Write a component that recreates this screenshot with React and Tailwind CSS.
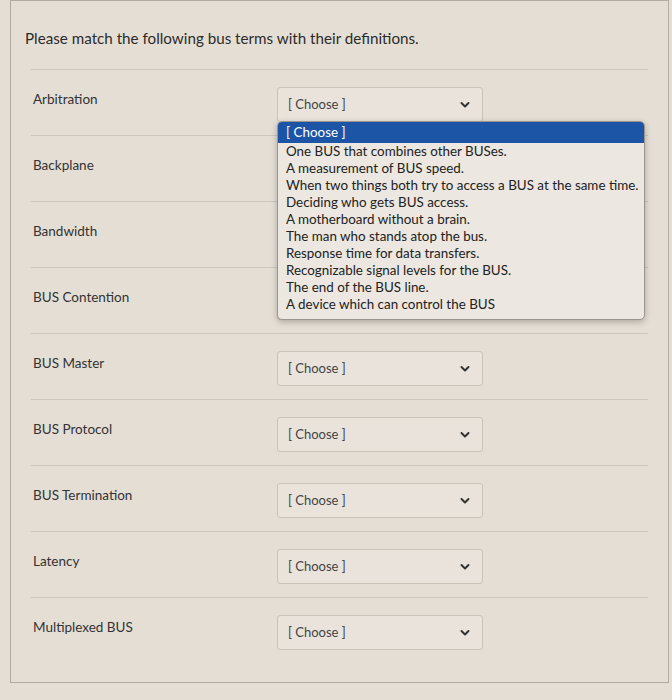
import React from 'react';

const terms = [
  'Arbitration',
  'Backplane',
  'Bandwidth',
  'BUS Contention',
  'BUS Master',
  'BUS Protocol',
  'BUS Termination',
  'Latency',
  'Multiplexed BUS',
];

const options = [
  'One BUS that combines other BUSes.',
  'A measurement of BUS speed.',
  'When two things both try to access a BUS at the same time.',
  'Deciding who gets BUS access.',
  'A motherboard without a brain.',
  'The man who stands atop the bus.',
  'Response time for data transfers.',
  'Recognizable signal levels for the BUS.',
  'The end of the BUS line.',
  'A device which can control the BUS',
];

function Chevron() {
  return (
    <svg width="10" height="8" viewBox="0 0 10 8" className="text-[#333]">
      <path d="M1.5 2 L5 5.5 L8.5 2" fill="none" stroke="currentColor" strokeWidth="2" strokeLinecap="round" strokeLinejoin="round" />
    </svg>
  );
}

function Select({ open }) {
  return (
    <div className="relative mt-[17px]">
      <div className="flex h-[35px] w-[206px] items-center justify-between rounded-[3px] border border-[#cbc3b8] bg-[#e9e3db] pl-[10px] pr-[12px] text-[13px] text-[#444]">
        <span>[ Choose ]</span>
        <Chevron />
      </div>
      {open && (
        <div className="absolute left-0 top-[34px] z-10 w-[368px] overflow-hidden rounded-[5px] border border-[#9b958d] bg-[#ece7e0] pb-[6px] text-[13.4px] leading-[17px] text-[#222] shadow-[0_2px_6px_rgba(0,0,0,0.25)]">
          <div className="flex h-[21px] items-center bg-[#1c55a6] pl-[8px] text-white">[ Choose ]</div>
          {options.map((o) => (
            <div key={o} className="whitespace-nowrap pl-[8px]">{o}</div>
          ))}
        </div>
      )}
    </div>
  );
}

export default function App() {
  return (
    <div className="min-h-[700px] bg-[#e5ded5] pl-[10px] pr-[3px] font-['Lato',sans-serif]">
      <div className="h-[683px] border border-[#b3aba1] px-[20px]">
        <div className="h-[68px] pt-[27px]">
          <p className="-ml-[6px] text-[15.2px] leading-[20px] text-[#2b2b2b]">
            Please match the following bus terms with their definitions.
          </p>
        </div>
        {terms.map((t, i) => (
          <div key={t} className="flex h-[66px] border-t border-[#cdc6bb]">
            <div className="w-[246px] pl-[2px] pt-[19px] text-[13.5px] text-[#333]">{t}</div>
            <Select open={i === 0} />
          </div>
        ))}
      </div>
    </div>
  );
}
